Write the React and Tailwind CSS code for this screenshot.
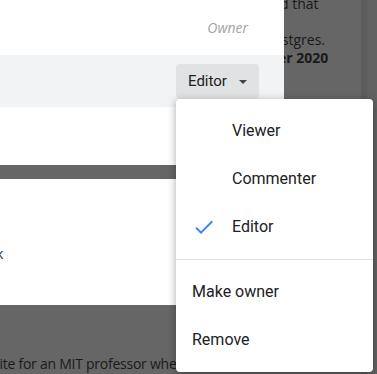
import React from "react";

export default function App() {
  return (
    <div className="relative w-[377px] h-[374px] overflow-hidden bg-[#666666] font-['Open_Sans',sans-serif]">
      {/* page behind the overlay */}
      <div className="flex h-full">
        <div className="flex-1 flex flex-col text-[14px] leading-[18px] text-[#1a1a1a] whitespace-nowrap">
          <div className="mt-[-5px] pl-[280px]">d that</div>
          <div className="h-[18px]"></div>
          <div className="pl-[265px]">Postgres.</div>
          <div className="pl-[278px] font-bold">er 2020</div>
          <div className="mt-auto mb-[1px] ml-[-7px] tracking-[-0.25px]">site for an MIT professor where</div>
        </div>
        <div className="w-[6px] bg-[#5c5c5c]"></div>
        <div className="w-[10px] bg-[#626262]"></div>
      </div>

      {/* dialog panels */}
      <div className="absolute left-0 top-0 w-[284px] flex flex-col">
        <div className="h-[55px] bg-white flex items-center justify-end pr-[36px]">
          <span className="italic text-[14px] leading-[18px] text-[#a3a3a3]">Owner</span>
        </div>
        <div className="h-[52px] bg-[#f1f3f4] flex items-center justify-end pr-[25px]">
          <div className="h-[35px] w-[83px] rounded-[4px] bg-[#e0e2e3] flex items-center pl-[12px]">
            <span className="font-['Roboto',sans-serif] text-[15px] text-[#202124]">Editor</span>
            <svg width="8" height="4" viewBox="0 0 8 4" className="ml-[12px] mt-[1px]">
              <path d="M0 0 L8 0 L4 4 Z" fill="#444" />
            </svg>
          </div>
        </div>
        <div className="h-[58px] bg-white"></div>
        <div className="h-[14px]"></div>
        <div className="h-[126px] bg-white pt-[66px] text-[14px] leading-[18px] text-[#333] whitespace-nowrap">
          <div className="ml-[-4px]">k</div>
        </div>
      </div>

      {/* dropdown menu */}
      <div className="absolute left-[176px] top-[99px] w-[197px] bg-white rounded-[4px] py-2 shadow-[0_2px_8px_rgba(0,0,0,0.35)] font-['Roboto',sans-serif] text-[16px] text-[#202124]">
        <div className="h-12 flex items-center pl-4">
          <div className="w-6 h-6"></div>
          <span className="ml-4">Viewer</span>
        </div>
        <div className="h-12 flex items-center pl-4">
          <div className="w-6 h-6"></div>
          <span className="ml-4">Commenter</span>
        </div>
        <div className="h-12 flex items-center pl-4">
          <svg width="24" height="24" viewBox="0 0 24 24">
            <path d="M9 16.17L4.83 12l-1.42 1.41L9 19 21 7l-1.41-1.41z" fill="#4285f4" />
          </svg>
          <span className="ml-4">Editor</span>
        </div>
        <div className="my-2 h-px bg-[#e0e0e0]"></div>
        <div className="h-12 flex items-center pl-4">Make owner</div>
        <div className="h-12 flex items-center pl-4">Remove</div>
      </div>
    </div>
  );
}
